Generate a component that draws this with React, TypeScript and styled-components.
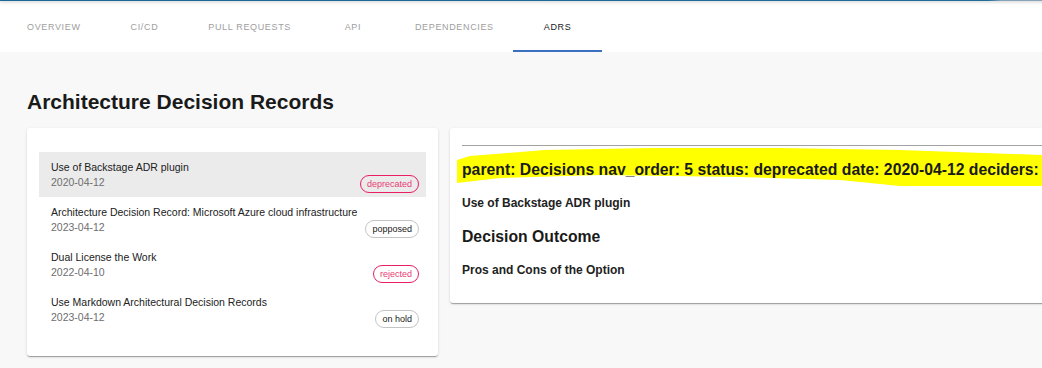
import React from 'react';
import styled, { createGlobalStyle } from 'styled-components';

const GlobalStyle = createGlobalStyle`
  html, body {
    margin: 0;
    padding: 0;
    background: #f8f8f8;
    overflow: hidden;
  }
  body {
    font-family: "Liberation Sans", Arial, Helvetica, sans-serif;
  }
`;

const Page = styled.div`
  width: 1300px;
  min-height: 368px;
  background: #f8f8f8;
`;

const TopEdge = styled.div`
  position: relative;
  z-index: 2;
  height: 1px;
  background: linear-gradient(90deg, #1b6894 0%, #1e6c97 76%, #86a3b8 77%, #97afc0 100%);
  box-shadow: 0 1px 3px rgba(0, 0, 0, 0.35);
`;

const TabBar = styled.nav`
  display: flex;
  align-items: stretch;
  height: 51px;
  padding-left: 2px;
  background: #ffffff;
`;

const Tab = styled.div<{ $active?: boolean }>`
  position: relative;
  display: flex;
  align-items: center;
  justify-content: center;
  box-sizing: border-box;
  min-width: 74px;
  padding: 0 25px;
  font-size: 9px;
  letter-spacing: 0.65px;
  text-transform: uppercase;
  color: ${(p) => (p.$active ? '#1b1b1b' : '#9e9e9e')};

  &::after {
    content: '';
    display: ${(p) => (p.$active ? 'block' : 'none')};
    position: absolute;
    left: -6px;
    right: -6px;
    bottom: 0;
    height: 2px;
    background: #3b6fc0;
  }
`;

const Content = styled.main`
  padding: 36px 27px 0;
`;

const PageTitle = styled.h1`
  margin: 0;
  font-size: 21px;
  line-height: 28px;
  font-weight: 700;
  color: #1a1a1a;
`;

const Columns = styled.div`
  display: grid;
  grid-template-columns: 411px 834px;
  gap: 12px;
  align-items: start;
  margin-top: 12px;
`;

const Card = styled.section`
  background: #ffffff;
  border-radius: 3px;
  box-shadow: 0 2px 1px -1px rgba(0, 0, 0, 0.2), 0 1px 1px 0 rgba(0, 0, 0, 0.14),
    0 1px 3px 0 rgba(0, 0, 0, 0.12);
`;

const ListCard = styled(Card)`
  padding: 24px 12px;
`;

const Row = styled.div<{ $selected?: boolean }>`
  display: flex;
  align-items: flex-end;
  box-sizing: border-box;
  height: 45px;
  padding: 8px 7px 4px 12px;
  background: ${(p) => (p.$selected ? '#ebebeb' : 'transparent')};
`;

const RowText = styled.div`
  flex: 1;
  align-self: flex-start;
  min-width: 0;
`;

const RowTitle = styled.div`
  font-size: 10.5px;
  line-height: 15px;
  color: #212121;
  white-space: nowrap;
`;

const RowDate = styled.div`
  font-size: 10.5px;
  line-height: 15px;
  color: #6e6e6e;
`;

const Chip = styled.span<{ $alert?: boolean }>`
  display: inline-flex;
  align-items: center;
  box-sizing: border-box;
  height: 18px;
  padding: 0 6px;
  border-radius: 9px;
  border: 1px solid ${(p) => (p.$alert ? '#e91e63' : '#c4c4c4')};
  font-size: 9px;
  color: ${(p) => (p.$alert ? '#ea3d73' : '#222222')};
  white-space: nowrap;
`;

const DocCard = styled(Card)`
  padding: 17px 12px 25px;
  overflow: hidden;
`;

const Rule = styled.hr`
  margin: 0;
  height: 0;
  border: none;
  border-top: 1px solid #a2a2a2;
`;

const Heading = styled.h2<{ $gap: number }>`
  position: relative;
  z-index: 0;
  margin: ${(p) => p.$gap}px 0 0;
  font-size: 15.75px;
  line-height: 21px;
  font-weight: 700;
  color: #1a1a1a;
  white-space: nowrap;
`;

const Highlight = styled.svg`
  position: absolute;
  z-index: -1;
  left: -10px;
  top: -15px;
  width: 720px;
  height: 50px;
  overflow: visible;
`;

const Para = styled.p<{ $gap: number }>`
  margin: ${(p) => p.$gap}px 0 0;
  font-size: 12px;
  line-height: 16px;
  font-weight: 700;
  color: #222222;
`;

type Record = { title: string; date: string; status: string; alert: boolean };

const records: Record[] = [
  { title: 'Use of Backstage ADR plugin', date: '2020-04-12', status: 'deprecated', alert: true },
  {
    title: 'Architecture Decision Record: Microsoft Azure cloud infrastructure',
    date: '2023-04-12',
    status: 'popposed',
    alert: false,
  },
  { title: 'Dual License the Work', date: '2022-04-10', status: 'rejected', alert: true },
  { title: 'Use Markdown Architectural Decision Records', date: '2023-04-12', status: 'on hold', alert: false },
];

const tabs = ['Overview', 'CI/CD', 'Pull Requests', 'API', 'Dependencies', 'ADRs'];

export default function App() {
  return (
    <Page>
      <GlobalStyle />
      <TopEdge />
      <TabBar>
        {tabs.map((t) => (
          <Tab key={t} $active={t === 'ADRs'}>
            {t}
          </Tab>
        ))}
      </TabBar>
      <Content>
        <PageTitle>Architecture Decision Records</PageTitle>
        <Columns>
          <ListCard>
            {records.map((r, i) => (
              <Row key={r.title} $selected={i === 0}>
                <RowText>
                  <RowTitle>{r.title}</RowTitle>
                  <RowDate>{r.date}</RowDate>
                </RowText>
                <Chip $alert={r.alert}>{r.status}</Chip>
              </Row>
            ))}
          </ListCard>
          <DocCard>
            <Rule />
            <Heading $gap={13}>
              <Highlight viewBox="-10 -15 720 50" aria-hidden="true">
                <path
                  d="M -5 1 L 8 -3 L 33 -5 L 83 -9 L 188 -11 L 318 -11 L 438 -9 L 580 -4 L 700 -2 L 700 27 L 580 27 L 438 27 L 378 21 L 278 18 L 138 16 L 38 19 L -5 24 Z"
                  fill="#ffff00"
                />
              </Highlight>
              parent: Decisions nav_order: 5 status: deprecated date: 2020-04-12 deciders:
            </Heading>
            <Para $gap={14.5}>Use of Backstage ADR plugin</Para>
            <Heading $gap={15}>Decision Outcome</Heading>
            <Para $gap={15.5}>Pros and Cons of the Option</Para>
          </DocCard>
        </Columns>
      </Content>
    </Page>
  );
}
